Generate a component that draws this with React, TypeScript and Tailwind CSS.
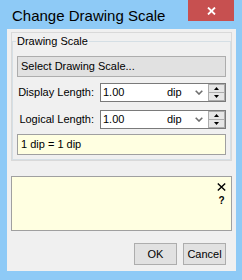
import React from 'react';

const Spinner: React.FC = () => (
  <div className="flex h-[17px] w-[17px] flex-col border border-[#acacac] bg-[#e6e6e6]">
    <div className="flex flex-1 items-center justify-center">
      <svg width="5" height="3" viewBox="0 0 5 3">
        <path d="M2.5 0 L5 3 L0 3 Z" fill="#000" />
      </svg>
    </div>
    <div className="h-px bg-[#acacac]" />
    <div className="flex flex-1 items-center justify-center">
      <svg width="5" height="3" viewBox="0 0 5 3">
        <path d="M0 0 L5 0 L2.5 3 Z" fill="#000" />
      </svg>
    </div>
  </div>
);

const LengthRow: React.FC<{ label: string; value: string; unit: string; className?: string }> = ({ label, value, unit, className }) => (
  <div className={`flex h-[19px] items-center ${className ?? ''}`}>
    <label className="w-[83px] shrink-0 pr-[6px] text-right">{label}</label>
    <div className="flex h-[19px] flex-1 items-center border border-[#7a7a7a] bg-white">
      <span className="flex-1 pl-[2px]">{value}</span>
      <span className="w-[28px]">{unit}</span>
      <svg width="8" height="5" viewBox="0 0 8 5" className="shrink-0">
        <polyline points="0.7,0.7 4,4 7.3,0.7" fill="none" stroke="#6e6e6e" strokeWidth="1.6" />
      </svg>
      <div className="ml-[5px]">
        <Spinner />
      </div>
    </div>
  </div>
);

const App: React.FC = () => {
  return (
    <div className="flex h-[280px] w-[242px] flex-col bg-[#8ecaf6] font-['Liberation_Sans',Arial,sans-serif] text-[11px] leading-[13px] text-black">
      {/* title bar */}
      <div className="flex h-[29px] shrink-0 items-start">
        <span className="pl-[12px] pt-[7px] text-[15px] leading-[17px]">Change Drawing Scale</span>
        <button className="ml-auto mr-[8px] flex h-[21px] w-[46px] items-center justify-center bg-[#c75050]">
          <svg width="9" height="8" viewBox="0 0 9 8">
            <path d="M1 0.5 L8 7.5 M8 0.5 L1 7.5" stroke="#fff" strokeWidth="1.8" />
          </svg>
        </button>
      </div>

      {/* client area */}
      <div className="mb-[9px] ml-[7px] mr-[6px] flex flex-1 flex-col bg-[#f0f0f0] px-[4px] pt-[3px]">
        <div className="border border-[#d9d9d9]">
          <fieldset className="mt-[2px] border border-[#d5dfe5] px-[4px] pb-[4px]">
            <legend className="-ml-[1px] px-[1px]">Drawing Scale</legend>
            <button className="mt-[8px] flex h-[21px] w-full items-center border border-[#adadad] bg-[#e1e1e1] pl-[3px] text-left">
              Select Drawing Scale...
            </button>
            <LengthRow className="mt-[6px]" label="Display Length:" value="1.00" unit="dip" />
            <LengthRow className="mt-[8px]" label="Logical Length:" value="1.00" unit="dip" />
            <div className="mt-[5px] flex h-[21px] items-center border border-[#a0a0a0] bg-[#ffffe1] pl-[3px]">
              1 dip = 1 dip
            </div>
          </fieldset>
        </div>

        <div className="mt-[15px] flex h-[55px] justify-end border border-[#a0a0a0] bg-[#ffffe1] pr-[5px] pt-[6px]">
          <div className="flex flex-col items-center">
            <svg width="9" height="8" viewBox="0 0 9 8">
              <path d="M0.8 0.5 L8.2 7.5 M8.2 0.5 L0.8 7.5" stroke="#000" strokeWidth="1.4" />
            </svg>
            <span className="mt-[4px] text-[10px] font-bold leading-[12px]">?</span>
          </div>
        </div>

        <div className="mt-[12px] flex justify-end gap-[6px] pr-[6px]">
          <button className="h-[22px] w-[43px] border border-[#adadad] bg-[#e1e1e1]">OK</button>
          <button className="h-[22px] w-[43px] border border-[#adadad] bg-[#e1e1e1]">Cancel</button>
        </div>
      </div>
    </div>
  );
};

export default App;
